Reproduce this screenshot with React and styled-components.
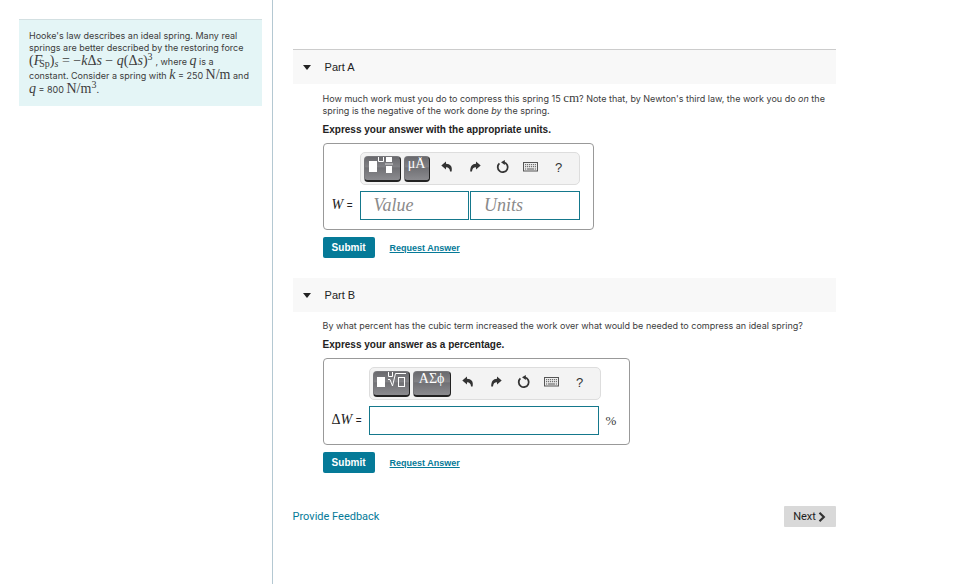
import React, { useState } from 'react'
import styled, { createGlobalStyle } from 'styled-components'

const GlobalStyle = createGlobalStyle`
    :root{
        --text-color: #3c3c3c;
        --heading-color: #222;
        --primary-color: #057a98;
        --math-font: "Liberation Serif", "Times New Roman", serif;
        --body-font: Inter, Arial, sans-serif;
        --ui-font: "Liberation Sans", Arial, sans-serif;
    }
    *{
        box-sizing: border-box;
    }
    body{
        margin: 0;
        background: #fff;
        color: var(--text-color);
        font-family: var(--body-font);
        font-size: 9px;
        line-height: 12px;
    }
    button, input{
        font-family: var(--ui-font);
        margin: 0;
    }
`

const UndoIcon = () => (
  <svg width="12" height="12" viewBox="0 0 12 12" fill="#333" aria-hidden="true">
    <path d="M0.3 4.4 5 0.6V2.7C9.2 2.9 11.8 5.2 10.6 10.6H9C9 7.6 7.6 6.4 5 6.2V8.4Z" />
  </svg>
)

const RedoIcon = () => (
  <svg width="12" height="12" viewBox="0 0 12 12" fill="#333" aria-hidden="true">
    <path d="M11.7 4.4 7 0.6V2.7C3 2.9 1.2 5.4 1.2 10.4H3C3.2 7.6 4.4 6.4 7 6.2V8.4Z" />
  </svg>
)

const ResetIcon = () => (
  <svg width="14" height="14" viewBox="0 0 14 14" fill="none" aria-hidden="true">
    <path d="M8 2.3A5 5 0 1 1 3.4 3.4" stroke="#333" strokeWidth="1.8" />
    <path d="M5 2.2 8.8 0V5Z" fill="#333" />
  </svg>
)

const KeyboardIcon = () => (
  <svg width="15" height="10" viewBox="0 0 15 10" fill="none" aria-hidden="true">
    <rect x="0.5" y="0.5" width="14" height="8.5" stroke="#555" fill="#eee" />
    <path d="M2 2.7H13M2 4.7H13" stroke="#555" strokeDasharray="1.2 0.8" />
    <path d="M2 7H3.2M4 7H11M11.8 7H13" stroke="#555" />
  </svg>
)

const TemplateIcon = () => (
  <svg width="35" height="24" viewBox="0 0 35 24" fill="none" aria-hidden="true">
    <rect x="4" y="4" width="8" height="11" fill="#fff" />
    <path d="M13.5 0V4.5H18.5V0" stroke="#fff" />
    <rect x="21" y="0" width="6" height="5" fill="#fff" />
    <path d="M20 7H28" stroke="#ddd" />
    <rect x="21" y="9" width="6" height="7" fill="#fff" />
  </svg>
)

const RootIcon = () => (
  <svg width="35" height="24" viewBox="0 0 35 24" fill="none" aria-hidden="true">
    <rect x="3" y="5" width="8" height="10" fill="#fff" />
    <path d="M14.5 0V4.5H18.5V0" stroke="#fff" />
    <path d="M14 7.5H16L18.5 14 21.5 1.5H32" stroke="#fff" />
    <rect x="24.5" y="5.5" width="6" height="9" stroke="#fff" />
  </svg>
)

const ChevronIcon = () => (
  <svg width="8" height="10" viewBox="0 0 8 10" fill="none" aria-hidden="true">
    <path d="M1.5 0.8 5.8 5 1.5 9.2" stroke="#333" strokeWidth="2.2" />
  </svg>
)

const Toolbar = ({ templateIcon, templateLabel, symbols, symbolsLabel, wide }) => (
  <ToolbarStyled role="toolbar">
    <PaletteButton type="button" $width={37} aria-label={templateLabel}>{templateIcon}</PaletteButton>
    <PaletteButton type="button" $width={wide ? 38 : 26} aria-label={symbolsLabel}>{symbols}</PaletteButton>
    <div className="tools">
      <ToolButton type="button" aria-label="undo"><UndoIcon /></ToolButton>
      <ToolButton type="button" aria-label="redo"><RedoIcon /></ToolButton>
      <ToolButton type="button" aria-label="reset"><ResetIcon /></ToolButton>
      <ToolButton type="button" aria-label="keyboard shortcuts"><KeyboardIcon /></ToolButton>
      <ToolButton type="button" aria-label="help">?</ToolButton>
    </div>
  </ToolbarStyled>
)

const Part = ({ title, divided, children }) => {
  const [open, setOpen] = useState(true)
  return (
    <PartStyled>
      <PartHeader $divided={divided}>
        <button type="button" aria-expanded={open} onClick={() => setOpen(!open)}>
          <svg width="8" height="5" viewBox="0 0 8 5" aria-hidden="true">
            <path d="M0 0H8L4 5Z" fill="#222" />
          </svg>
          {title}
        </button>
      </PartHeader>
      {open && <PartBody>{children}</PartBody>}
    </PartStyled>
  )
}

const Actions = () => (
  <ActionsStyled>
    <SubmitButton type="submit">Submit</SubmitButton>
    <a href="#request">Request Answer</a>
  </ActionsStyled>
)

const App = () => {
  return (
    <Page>
      <GlobalStyle />
      <Sidebar>
        <Problem>
          Hooke's law describes an ideal spring. Many real springs are better described by the restoring force{' '}
          <Formula>
            (<i>F</i><sub className="over">Sp</sub>)<sub><i>s</i></sub> = −<i>k</i>Δ<i>s</i> − <i>q</i>(Δ<i>s</i>)<sup>3</sup>
            &thinsp;
          </Formula>
          , where <Formula><i>q</i></Formula> is a constant. Consider a spring with <Formula><i>k</i></Formula> = 250{' '}
          <Formula>N/m</Formula> and <Formula><i>q</i></Formula> = 800 <Formula>N/m<sup>3</sup></Formula>.
        </Problem>
      </Sidebar>
      <Main>
        <Part title="Part A" divided>
          <p>
            How much work must you do to compress this spring 15 <Unit>cm</Unit>? Note that, by Newton's third law, the
            work you do <em>on</em> the spring is the negative of the work done <em>by</em> the spring.
          </p>
          <Instruction>Express your answer with the appropriate units.</Instruction>
          <form onSubmit={(e) => e.preventDefault()}>
            <AnswerBox>
              <Toolbar
                templateIcon={<TemplateIcon />}
                templateLabel="templates"
                symbols="μÅ"
                symbolsLabel="units symbols"
              />
              <label htmlFor="work"><i>W</i> <span>=</span></label>
              <FieldPair>
                <Field id="work" placeholder="Value" />
                <Field placeholder="Units" aria-label="Units" />
              </FieldPair>
            </AnswerBox>
            <Actions />
          </form>
        </Part>
        <Part title="Part B">
          <p>By what percent has the cubic term increased the work over what would be needed to compress an ideal spring?</p>
          <Instruction>Express your answer as a percentage.</Instruction>
          <form onSubmit={(e) => e.preventDefault()}>
            <AnswerBox $suffixed>
              <Toolbar
                templateIcon={<RootIcon />}
                templateLabel="templates"
                symbols="ΑΣϕ"
                symbolsLabel="greek symbols"
                wide
              />
              <label htmlFor="percent">Δ<i>W</i> <span>=</span></label>
              <Field id="percent" $width="230px" />
              <Suffix>%</Suffix>
            </AnswerBox>
            <Actions />
          </form>
        </Part>
        <Footer>
          <a href="#feedback">Provide Feedback</a>
          <button type="button">Next <ChevronIcon /></button>
        </Footer>
      </Main>
    </Page>
  )
}

const Page = styled.div`
    display: grid;
    grid-template-columns: minmax(0, 2fr) minmax(0, 5fr);
    min-height: 100vh;
`

const Sidebar = styled.aside`
    border-right: 1px solid #b4c8d2;
    padding: 19px 10px 19px 19px;
`

const Problem = styled.p`
    margin: 0;
    padding: 10px;
    background: #e4f5f6;
    border-top: 1px solid #d3e0e2;
`

const Formula = styled.span`
    font-family: var(--math-font);
    font-size: 14px;
    line-height: 14px;
    white-space: nowrap;

    sub, sup{
        font-size: 10px;
        line-height: 1px;
        vertical-align: -2px;
    }
    sup{
        vertical-align: 5px;
    }
    .over{
        margin-left: -3px;
    }
`

const Unit = styled.span`
    font-family: var(--math-font);
    font-size: 13px;
    line-height: 12px;
`

const Main = styled.main`
    padding: 49px 20px 20px;

    > *{
        max-width: 543px;
    }
`

const PartStyled = styled.section`
    margin-bottom: 20px;
`

const PartHeader = styled.h2`
    margin: 0;
    background: #f8f8f8;
    border-top: ${(props) => (props.$divided ? '1px solid #ccc' : 'none')};

    button{
        display: flex;
        align-items: center;
        gap: 14px;
        width: 100%;
        height: 34px;
        padding: 0 10px;
        border: 0;
        background: none;
        color: var(--heading-color);
        font-size: 11px;
        cursor: pointer;
    }
`

const PartBody = styled.div`
    padding: 8px 0 0 30px;

    p{
        margin: 0 0 7px;
    }
`

const Instruction = styled.p`
    color: var(--heading-color);
    font-family: var(--ui-font);
    font-size: 10px;
    font-weight: bold;
`

const AnswerBox = styled.div`
    display: inline-grid;
    grid-template-columns: ${(props) => (props.$suffixed ? 'auto auto auto' : 'auto auto')};
    align-items: center;
    gap: 6px 7px;
    padding: 8px 13px 9px 8px;
    border: 1px solid #999;
    border-radius: 4px;
    vertical-align: top;

    label{
        grid-column: 1;
        font-family: var(--math-font);
        font-size: 14px;
        color: #222;
        white-space: nowrap;
        span{
            font-family: var(--ui-font);
            font-size: 10px;
        }
    }
`

const ToolbarStyled = styled.div`
    grid-column: 2 / -1;
    justify-self: start;
    display: flex;
    align-items: flex-start;
    gap: 3px;
    height: 33px;
    padding: 3px 6px 3px 3px;
    border: 1px solid #ddd;
    border-radius: 5px;
    background: #f3f3f3;

    .tools{
        display: flex;
    }
`

const PaletteButton = styled.button`
    display: flex;
    justify-content: center;
    align-items: flex-start;
    width: ${(props) => props.$width}px;
    height: 26px;
    padding: 0;
    overflow: hidden;
    border: 1px solid #77777b;
    border-right-color: #222;
    border-bottom: 2px solid #222;
    border-radius: 4px;
    background: linear-gradient(#69696d, #838387 45%, #707074 46%, #8b8b8f);
    color: #fff;
    && {
        font-family: var(--math-font);
    }
    font-size: 14px;
    line-height: 14px;
    cursor: pointer;
`

const ToolButton = styled.button`
    display: flex;
    justify-content: center;
    align-items: center;
    width: 28px;
    height: 22px;
    padding: 0;
    border: 0;
    background: none;
    color: #333;
    font-size: 13px;
    cursor: pointer;
`

const Field = styled.input`
    width: ${(props) => props.$width || 'auto'};
    min-width: 0;
    height: 29px;
    padding: 0 13px;
    border: 1px solid #15788c;
    border-radius: 0;
    background: #fff;
    && {
        font-family: var(--math-font);
    }
    font-size: 18px;

    &::placeholder{
        color: #8a8a8a;
        font-style: italic;
        opacity: 1;
    }
`

const FieldPair = styled.div`
    display: flex;
    gap: 1px;
    width: 220px;

    ${Field}{
        flex: 1 1 0;
    }
`

const Suffix = styled.span`
    font-family: var(--math-font);
    font-size: 13px;
`

const ActionsStyled = styled.div`
    display: flex;
    align-items: center;
    gap: 15px;
    margin-top: 7px;

    a{
        color: var(--primary-color);
        font-family: var(--ui-font);
        font-size: 9px;
        font-weight: bold;
    }
`

const SubmitButton = styled.button`
    width: 52px;
    height: 21px;
    padding: 0;
    border: 0;
    border-radius: 2px;
    background: var(--primary-color);
    color: #fff;
    font-size: 10px;
    font-weight: bold;
    cursor: pointer;
`

const Footer = styled.footer`
    display: flex;
    justify-content: space-between;
    align-items: center;
    margin-top: 33px;
    font-family: Roboto, Arial, sans-serif;
    font-size: 11px;

    a{
        color: var(--primary-color);
        text-decoration: none;
    }
    button{
        display: flex;
        align-items: center;
        justify-content: center;
        gap: 2px;
        width: 52px;
        height: 21px;
        padding: 0;
        border: 0;
        border-radius: 1px;
        background: #d9d9d9;
        color: #222;
        font-family: inherit;
        font-size: 11px;
        cursor: pointer;
    }
`

export default App
